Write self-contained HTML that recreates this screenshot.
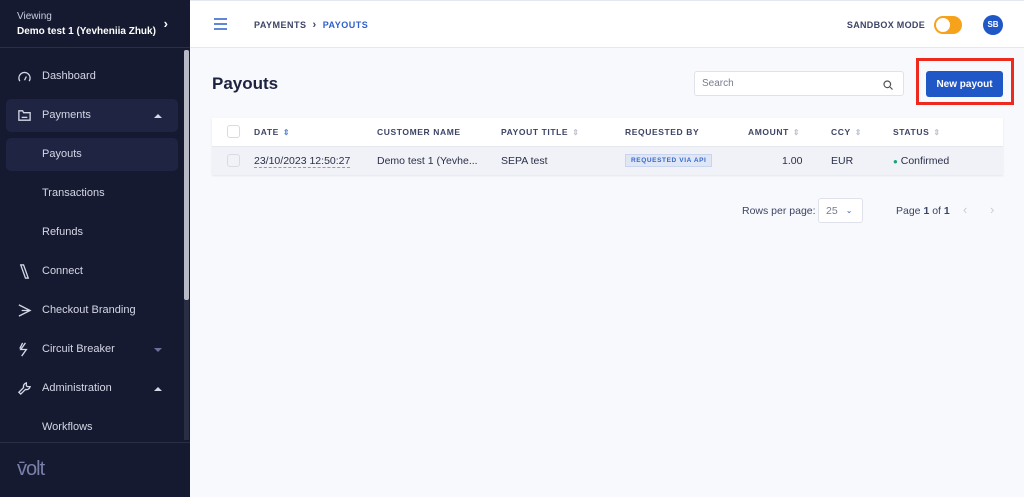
<!DOCTYPE html>
<html><head><meta charset="utf-8"><style>
*{box-sizing:border-box;margin:0;padding:0}
body{width:1024px;height:497px;overflow:hidden;font-family:"Liberation Sans",sans-serif;background:#f8f9fc;position:relative}
.sb{position:absolute;left:0;top:0;width:190px;height:497px;background:#161a30;color:#c9cde0}
.sbh{height:48px;border-bottom:1px solid #2a2f48;padding:11px 0 0 17px;position:relative}
.sbh .v{font-size:10px;color:#c9cde0}
.sbh .n{font-size:10px;font-weight:bold;color:#fff;margin-top:4px}
.sbh .ar{position:absolute;right:22px;top:16px;color:#fff;font-size:13px;font-weight:bold}
.it{position:absolute;left:6px;width:172px;height:33px;font-size:11px;color:#d4d7e6;padding-left:36px;line-height:33px;border-radius:5px}
.it.act{background:#1f2443}
.it svg{position:absolute;left:11px;top:9px}
.car{position:absolute;right:16px;top:15px;width:0;height:0;border-left:4px solid transparent;border-right:4px solid transparent}
.up{border-bottom:4px solid #d4d7e6}
.dn{border-top:4px solid #6b7099;top:15px}
.scr{position:absolute;left:184px;top:50px;width:5px;height:390px;background:#2a2e45}
.scr i{display:block;width:5px;height:250px;background:#b7b9c4;border-radius:2px}
.foot{position:absolute;left:0;top:442px;width:190px;border-top:1px solid #2a2f48;height:55px}
.logo{position:absolute;left:17px;top:458px;font-size:20px;color:#7980a8;letter-spacing:-1px}
.top{position:absolute;left:190px;top:0;right:0;height:48px;background:#fff;border-bottom:1px solid #e5e8f0;border-top:1px solid #e5e8f0}
.bc{position:absolute;left:64px;top:18px;font-size:9px;font-weight:bold;letter-spacing:.5px;color:#3d4466}
.bc b{color:#2d5fcc}
.sm{position:absolute;right:99px;top:19px;font-size:9px;color:#3d4466;letter-spacing:.3px;font-weight:bold}
.tg{position:absolute;right:62px;top:15px;width:28px;height:18px;border-radius:9px;background:#f7a21b}
.tg i{position:absolute;left:2px;top:2px;width:14px;height:14px;border-radius:50%;background:#fff}
.av{position:absolute;right:21px;top:14px;width:20px;height:20px;border-radius:50%;background:#1f57c7;color:#fff;font-size:8px;font-weight:bold;text-align:center;line-height:20px}
h1{position:absolute;left:212px;top:74px;font-size:17px;color:#1d2240}
.srch{position:absolute;left:694px;top:71px;width:210px;height:25px;background:#fff;border:1px solid #dfe2ea;border-radius:3px;font-size:10px;color:#777c90;padding-left:7px;display:flex;align-items:center}
.btn{position:absolute;left:926px;top:71px;width:77px;height:26px;background:#1f57c7;border-radius:3px;color:#fff;font-size:10px;font-weight:bold;display:flex;align-items:center;justify-content:center}
.red{position:absolute;left:916px;top:58px;width:98px;height:47px;border:3px solid #ee2a1e}
.tbl{position:absolute;left:212px;top:118px;width:791px;height:57px;background:#fff;box-shadow:0 1px 2px rgba(0,0,0,.08)}
.row2{position:absolute;left:0;top:28px;width:791px;height:29px;background:#f1f2f7;border-top:1px solid #e6e8ef}
.th{position:absolute;top:9px;font-size:8.5px;font-weight:bold;letter-spacing:.6px;color:#3d4466}
.td{position:absolute;top:8px;font-size:10.5px;color:#2a2f48}
.cb{position:absolute;left:15px;width:13px;height:13px;border:1px solid #d8dbe4;border-radius:3px;background:#fff}
.so{color:#bfc3cf;font-size:8px;margin-left:4px}
.pill{position:absolute;left:413px;top:7px;background:#dfe6f5;border:1px solid #c9d5ee;color:#3468c9;font-size:6.5px;font-weight:bold;letter-spacing:.6px;padding:2px 5px}
.pg{position:absolute;top:205px;font-size:10.5px;color:#3d4466}
.sel{position:absolute;left:818px;top:198px;width:45px;height:25px;border:1px solid #dfe2ea;border-radius:3px;background:#fff;font-size:10.5px;color:#777c90;padding-left:7px;display:flex;align-items:center}
</style></head><body>
<div class="sb">
 <div class="sbh"><div class="v">Viewing</div><div class="n">Demo test 1 (Yevheniia Zhuk)</div><div class="ar">&#8250;</div></div>
 <div class="it" style="top:60px"><svg width="15" height="15" viewBox="0 0 16 16" fill="none" stroke="#d4d7e6" stroke-width="1.4"><path d="M3 13A6 6 0 1 1 13 13"/><path d="M8 12l2-4"/></svg>Dashboard</div>
 <div class="it act" style="top:99px"><svg width="15" height="15" viewBox="0 0 16 16" fill="none" stroke="#d4d7e6" stroke-width="1.4"><path d="M2 3h4l1 2h7v8H2z"/><path d="M5 10h6"/></svg>Payments<span class="car up"></span></div>
 <div class="it act" style="top:138px">Payouts</div>
 <div class="it" style="top:177px">Transactions</div>
 <div class="it" style="top:216px">Refunds</div>
 <div class="it" style="top:255px"><svg width="15" height="15" viewBox="0 0 16 16" fill="none" stroke="#d4d7e6" stroke-width="1.4"><path d="M4 1l3 0 5 14-3 0z"/></svg>Connect</div>
 <div class="it" style="top:294px"><svg width="15" height="15" viewBox="0 0 16 16" fill="none" stroke="#d4d7e6" stroke-width="1.4"><path d="M2 2l12 6-12 6M5 8h9"/></svg>Checkout Branding</div>
 <div class="it" style="top:333px"><svg width="15" height="15" viewBox="0 0 16 16" fill="none" stroke="#d4d7e6" stroke-width="1.4"><path d="M9 1L4 8h6l-5 7M6 1l-3 6"/></svg>Circuit Breaker<span class="car dn"></span></div>
 <div class="it" style="top:372px"><svg width="15" height="15" viewBox="0 0 16 16" fill="none" stroke="#d4d7e6" stroke-width="1.4"><path d="M10 2a4 4 0 0 0-3 5L2 12l2 2 5-5a4 4 0 0 0 5-3l-3 0-1-1z"/></svg>Administration<span class="car up"></span></div>
 <div class="it" style="top:411px">Workflows</div>
 <div class="scr"><i></i></div>
 <div class="foot"></div>
 <div class="logo">v&#772;olt</div>
</div>
<div class="top">
 <svg style="position:absolute;left:24px;top:17px" width="13" height="12" viewBox="0 0 13 12" stroke="#2d5fcc" stroke-width="1.6"><path d="M0 1h13M0 6h13M0 11h13"/></svg>
 <div class="bc">PAYMENTS &nbsp;<span style="font-size:11px">&#8250;</span>&nbsp; <b>PAYOUTS</b></div>
 <div class="sm">SANDBOX MODE</div>
 <div class="tg"><i></i></div>
 <div class="av">SB</div>
</div>
<h1>Payouts</h1>
<div class="srch">Search<svg style="position:absolute;right:10px;top:8px" width="10" height="10" viewBox="0 0 10 10" fill="none" stroke="#555" stroke-width="1.2"><circle cx="4.3" cy="4.3" r="3.3"/><path d="M7 7l2.5 2.5"/></svg></div>
<div class="btn">New payout</div>
<div class="red"></div>
<div class="tbl">
 <span class="cb" style="top:7px"></span>
 <div class="th" style="left:42px">DATE<span class="so" style="color:#5b85d6">&#8661;</span></div>
 <div class="th" style="left:165px">CUSTOMER NAME</div>
 <div class="th" style="left:289px">PAYOUT TITLE<span class="so">&#8661;</span></div>
 <div class="th" style="left:413px">REQUESTED BY</div>
 <div class="th" style="left:536px">AMOUNT<span class="so">&#8661;</span></div>
 <div class="th" style="left:619px">CCY<span class="so">&#8661;</span></div>
 <div class="th" style="left:681px">STATUS<span class="so">&#8661;</span></div>
 <div class="row2">
  <span class="cb" style="top:7px;background:#f1f2f7"></span>
  <div class="td" style="left:42px;border-bottom:1px dashed #999">23/10/2023 12:50:27</div>
  <div class="td" style="left:165px">Demo test 1 (Yevhe...</div>
  <div class="td" style="left:289px">SEPA test</div>
  <div class="pill">REQUESTED VIA API</div>
  <div class="td" style="left:570px">1.00</div>
  <div class="td" style="left:619px">EUR</div>
  <div class="td" style="left:681px"><span style="color:#1aa37a;font-size:8px">&#9679;</span> Confirmed</div>
 </div>
</div>
<div class="pg" style="left:742px">Rows per page:</div>
<div class="sel">25 <span style="color:#2d5fcc;font-size:8px;margin-left:8px">&#8964;</span></div>
<div class="pg" style="left:896px">Page <b>1</b> of <b>1</b></div>
<div class="pg" style="left:963px;color:#c9ccd6;font-size:13px;top:202px">&#8249;</div>
<div class="pg" style="left:990px;color:#c9ccd6;font-size:13px;top:202px">&#8250;</div>
</body></html>
